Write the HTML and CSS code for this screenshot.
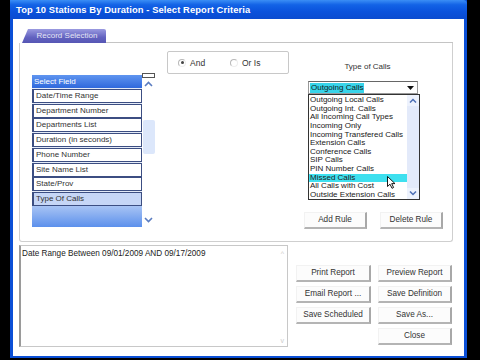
FILE: index.html
```html
<!DOCTYPE html>
<html>
<head>
<meta charset="utf-8">
<link rel="stylesheet" href="styles.css">
</head>
<body>
<div class="window">
  <div class="titlebar">Top 10 Stations By Duration - Select Report Criteria</div>
  <div class="client">
    <div class="tabstrip">
      <div class="tab">Record Selection</div>
      <div class="tabline"></div>
    </div>
    <div class="panel">
      <div class="leftcol">
        <div class="fieldlist">
          <div class="fl-main">
            <div class="fl-head">Select Field</div>
            <div class="fl-row">Date/Time Range</div>
            <div class="fl-row">Department Number</div>
            <div class="fl-row">Departments List</div>
            <div class="fl-row">Duration (in seconds)</div>
            <div class="fl-row">Phone Number</div>
            <div class="fl-row">Site Name List</div>
            <div class="fl-row">State/Prov</div>
            <div class="fl-row sel">Type Of Calls</div>
            <div class="fl-fill"></div>
          </div>
          <div class="fl-scroll">
            <div class="fl-corner"></div>
            <svg class="chev" width="9" height="6" viewBox="0 0 9 6"><path d="M1 5 L4.5 1.5 L8 5" fill="none" stroke="#5a7cc0" stroke-width="1.6"/></svg>
            <div class="fl-thumb"></div>
            <div class="fl-spacer"></div>
            <svg class="chev" width="9" height="6" viewBox="0 0 9 6"><path d="M1 1 L4.5 4.5 L8 1" fill="none" stroke="#5a7cc0" stroke-width="1.6"/></svg>
          </div>
        </div>
      </div>
      <div class="midcol">
        <div class="andor">
          <span class="radio on"></span><span class="rlabel">And</span>
          <span class="radio"></span><span class="rlabel">Or Is</span>
        </div>
      </div>
      <div class="rightcol">
        <div class="tlabel">Type of Calls</div>
        <div class="combo">
          <span class="combo-sel">Outgoing Calls</span>
          <svg class="combo-arrow" width="7" height="4" viewBox="0 0 7 4"><path d="M0 0 H7 L3.5 4 Z" fill="#111"/></svg>
        </div>
        <div class="droplist">
          <div class="dl-items">
            <div class="dl-item">Outgoing Local Calls</div>
            <div class="dl-item">Outgoing Int. Calls</div>
            <div class="dl-item">All Incoming Call Types</div>
            <div class="dl-item">Incoming Only</div>
            <div class="dl-item">Incoming Transfered Calls</div>
            <div class="dl-item">Extension Calls</div>
            <div class="dl-item">Conference Calls</div>
            <div class="dl-item">SIP Calls</div>
            <div class="dl-item">PIN Number Calls</div>
            <div class="dl-item hl">Missed Calls</div>
            <div class="dl-item">All Calls with Cost</div>
            <div class="dl-item">Outside Extension Calls</div>
          </div>
          <div class="dl-scroll">
            <div class="dl-btn"><svg width="8" height="5" viewBox="0 0 8 5"><path d="M1 4.5 L4 1.5 L7 4.5" fill="none" stroke="#4d6fb5" stroke-width="1.5"/></svg></div>
            <div class="dl-track"></div>
            <div class="dl-btn"><svg width="8" height="5" viewBox="0 0 8 5"><path d="M1 0.5 L4 3.5 L7 0.5" fill="none" stroke="#4d6fb5" stroke-width="1.5"/></svg></div>
          </div>
          <svg class="cursor" width="9" height="13" viewBox="0 0 9 13"><path d="M0.5 0.5 V10.5 L3 8.2 L5 12.3 L6.6 11.5 L4.7 7.6 L8 7.6 Z" fill="#fff" stroke="#000" stroke-width="0.9"/></svg>
        </div>
        <div class="rulebtns">
          <div class="btn">Add Rule</div>
          <div class="btn">Delete Rule</div>
        </div>
      </div>
    </div>
    <div class="bottom">
      <div class="criteria">
        <div class="crit-text">Date Range Between 09/01/2009 AND 09/17/2009</div>
        <span class="crit-up">^</span>
        <span class="crit-down">v</span>
      </div>
      <div class="actions">
        <div class="btn">Print Report</div>
        <div class="btn">Preview Report</div>
        <div class="btn">Email Report ...</div>
        <div class="btn">Save Definition</div>
        <div class="btn">Save Scheduled</div>
        <div class="btn">Save As...</div>
        <div class="btn close">Close</div>
      </div>
    </div>
  </div>
</div>
</body>
</html>
```

FILE: styles.css
```css
* { box-sizing: border-box; }
html, body { margin: 0; padding: 0; }
body {
  background: #000;
  width: 480px;
  height: 360px;
  overflow: hidden;
  font-family: "Liberation Sans", Arial, sans-serif;
  font-size: 8.5px;
  color: #1a1a1a;
}
.window {
  margin-left: 10px;
  width: 457px;
  height: 358px;
  background: #0b4fd6;
  display: flex;
  flex-direction: column;
}
.titlebar {
  height: 19px;
  flex: none;
  background: linear-gradient(#3b8ef5 0%, #1363e6 25%, #0a52dc 60%, #0a4bd0 100%);
  color: #fff;
  font-weight: bold;
  font-size: 9.4px;
  line-height: 19px;
  padding-left: 6px;
  letter-spacing: 0.1px;
  white-space: nowrap;
  border-top-right-radius: 4px;
}
.client {
  flex: 1;
  margin: 0 3px 2px 3px;
  background: #fff;
  padding: 10px 0 0 6px;
  display: flex;
  flex-direction: column;
}
.tabstrip {
  display: flex;
  align-items: flex-end;
  height: 14px;
}
.tab {
  margin-left: 3px;
  width: 84px;
  height: 14px;
  background: linear-gradient(#9a9ae0, #6262c0 60%, #5656b4);
  clip-path: polygon(6px 0, 100% 0, 100% 100%, 0 100%);
  color: #e4e4f4;
  font-size: 8px;
  line-height: 14px;
  text-align: center;
  padding-left: 6px;
  border-top-right-radius: 2px;
}
.tabline {
  width: 347px;
  border-bottom: 1px solid #c4c4c4;
}
.panel {
  width: 434px;
  height: 199px;
  border: 1px solid #cfcfcf;
  border-top: none;
  border-radius: 0 0 3px 3px;
  display: flex;
  align-items: flex-start;
}
.leftcol { margin: 32px 0 0 12px; }
.fieldlist {
  width: 123px;
  height: 152px;
  display: flex;
}
.fl-main {
  width: 110px;
  display: flex;
  flex-direction: column;
  background: #e4ebf8;
}
.fl-head {
  height: 13px;
  background: linear-gradient(#5f95f0, #2f68dc);
  color: #fff;
  line-height: 13px;
  padding-left: 2px;
  font-size: 8px;
}
.fl-row {
  height: 14px;
  margin-top: 0.75px;
  background: #fff;
  border: 1px solid #3c4e82;
  border-left-width: 2px;
  line-height: 12px;
  padding-left: 2px;
  color: #333;
  font-size: 8px;
  white-space: nowrap;
}
.fl-row.sel { background: #c6d6f6; }
.fl-fill {
  flex: 1;
  background: linear-gradient(#a8c4f4, #5c90ec);
}
.fl-scroll {
  width: 13px;
  display: flex;
  flex-direction: column;
  align-items: center;
  background: #fff;
}
.fl-corner {
  width: 13px;
  height: 5px;
  margin-top: -2px;
  border: 1px solid #555;
  background: #fff;
}
.chev { margin-top: 3px; flex: none; }
.fl-thumb {
  width: 12px;
  height: 34px;
  margin-top: 33px;
  background: #dce7fb;
  border-radius: 2px;
}
.fl-spacer { flex: 1; }
.fl-scroll .chev:last-child { margin-bottom: 4px; }
.midcol { margin: 8px 0 0 12px; }
.andor {
  width: 122px;
  height: 23px;
  border: 1px solid #c8c8c8;
  border-radius: 2px;
  display: flex;
  align-items: center;
  padding-left: 10px;
}
.radio {
  width: 8px;
  height: 8px;
  border-radius: 50%;
  border: 1px solid #b8b8b8;
  border-right-color: #eee;
  border-bottom-color: #eee;
  display: inline-block;
  position: relative;
}
.radio.on::after {
  content: "";
  position: absolute;
  left: 1.5px;
  top: 1.5px;
  width: 3px;
  height: 3px;
  border-radius: 50%;
  background: #444;
}
.rlabel { margin-left: 4px; width: 40px; color: #333; }
.rightcol { margin: 0 0 0 15px; width: 139px; }
.tlabel {
  margin-top: 19px;
  height: 11px;
  text-align: center;
  padding-right: 12px;
  color: #333;
  font-size: 8px;
}
.combo {
  margin: 8px 0 0 4px;
  width: 110px;
  height: 13px;
  border: 1px solid #999;
  border-top-color: #666;
  display: flex;
  align-items: center;
  padding-left: 1px;
  background: #fff;
}
.combo-sel {
  background: #38d4ea;
  color: #122;
  height: 10px;
  line-height: 10px;
  padding: 0 1px;
  font-size: 8px;
}
.combo-arrow { margin-left: auto; margin-right: 3px; }
.droplist {
  position: relative;
  margin: 0 0 0 4px;
  width: 112px;
  height: 106px;
  border: 1px solid #333;
  display: flex;
  background: #fff;
}
.dl-items {
  flex: 1;
  padding-top: 1px;
}
.dl-item {
  height: 8.65px;
  line-height: 8.65px;
  font-size: 8px;
  padding-left: 1px;
  white-space: nowrap;
  color: #202020;
}
.dl-item.hl { background: #3ee0ef; }
.dl-scroll {
  width: 12px;
  display: flex;
  flex-direction: column;
  background: #e3eafa;
}
.dl-btn {
  height: 11px;
  display: flex;
  align-items: center;
  justify-content: center;
  background: #edf2fd;
}
.dl-track { flex: 1; }
.cursor { position: absolute; left: 78px; top: 81px; }
.rulebtns {
  margin-top: 12px;
  display: flex;
  gap: 13px;
}
.btn {
  width: 63px;
  height: 17px;
  background: #fcfcfc;
  border-top: 1px solid #f2f2f2;
  border-left: 1px solid #f2f2f2;
  border-right: 2px solid #a8a8a8;
  border-bottom: 2px solid #b4b4b4;
  text-align: center;
  line-height: 14px;
  color: #333;
  font-size: 8.2px;
  white-space: nowrap;
}
.bottom {
  margin-top: 3px;
  display: flex;
  align-items: flex-start;
}
.criteria {
  position: relative;
  width: 269px;
  height: 102px;
  border: 1px solid #c8c8c8;
  border-left: 2px solid #9a9a9a;
  padding: 3px 0 0 1px;
}
.crit-text { color: #222; white-space: nowrap; font-size: 8.2px; }
.crit-up, .crit-down {
  position: absolute;
  right: 3px;
  font-size: 7px;
  color: #ccc;
}
.crit-up { top: 4px; }
.crit-down { bottom: 2px; }
.actions {
  margin: 20px 0 0 8px;
  display: grid;
  grid-template-columns: 75px 74px;
  column-gap: 7px;
  row-gap: 4px;
}
.actions .btn { width: auto; }
.actions .close { grid-column: 2; }
```
